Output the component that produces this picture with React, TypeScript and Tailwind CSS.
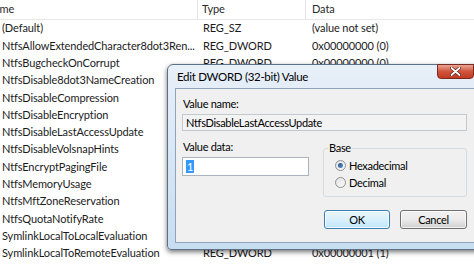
const rows: [string, string, string][] = [
  ['(Default)', 'REG_SZ', '(value not set)'],
  ['NtfsAllowExtendedCharacter8dot3Ren...', 'REG_DWORD', '0x00000000 (0)'],
  ['NtfsBugcheckOnCorrupt', 'REG_DWORD', '0x00000000 (0)'],
  ['NtfsDisable8dot3NameCreation', 'REG_DWORD', '0x00000000 (0)'],
  ['NtfsDisableCompression', 'REG_DWORD', '0x00000000 (0)'],
  ['NtfsDisableEncryption', 'REG_DWORD', '0x00000000 (0)'],
  ['NtfsDisableLastAccessUpdate', 'REG_DWORD', '0x00000001 (1)'],
  ['NtfsDisableVolsnapHints', 'REG_DWORD', '0x00000000 (0)'],
  ['NtfsEncryptPagingFile', 'REG_DWORD', '0x00000000 (0)'],
  ['NtfsMemoryUsage', 'REG_DWORD', '0x00000000 (0)'],
  ['NtfsMftZoneReservation', 'REG_DWORD', '0x00000000 (0)'],
  ['NtfsQuotaNotifyRate', 'REG_DWORD', '0x00000e10 (3600)'],
  ['SymlinkLocalToLocalEvaluation', 'REG_DWORD', '0x00000001 (1)'],
  ['SymlinkLocalToRemoteEvaluation', 'REG_DWORD', '0x00000001 (1)'],
];

function Radio({ checked, label }: { checked?: boolean; label: string }) {
  return (
    <div className="flex h-[17px] items-center">
      <span className="flex h-[11px] w-[11px] items-center justify-center rounded-full border border-[#8f8f8f] bg-gradient-to-br from-[#e2e2e2] to-[#fbfbfb]">
        {checked && <span className="h-[5px] w-[5px] rounded-full bg-gradient-to-br from-[#234f82] to-[#5a96da]" />}
      </span>
      <span className="ml-[3px] leading-[14px]">{label}</span>
    </div>
  );
}

function EditDwordDialog() {
  return (
    <div className="absolute left-[167px] top-[64px] flex h-[186px] w-[316px] flex-col rounded-t-[6px] rounded-b-[4px] border border-[#5d7088] bg-gradient-to-b from-[#e8f0f9] via-[#d8e6f4] to-[#c7ddf0] tracking-[-0.3px] shadow-[0_2px_5px_rgba(0,0,0,0.55)]">
      <div className="relative flex h-[23px] items-center pl-[9px] text-[11.5px] text-black">
        Edit DWORD (32-bit) Value
        <div className="absolute right-[8px] top-[-1px] flex h-[15px] w-[37px] items-center justify-center rounded-b-[4px] border border-[#7a2a22] bg-gradient-to-b from-[#e8a493] via-[#d0533c] to-[#c23b22]">
          <svg width="11" height="9" viewBox="0 0 11 9" aria-hidden="true">
            <path d="M1.5 1 L9.5 8 M9.5 1 L1.5 8" stroke="#5a1d14" strokeWidth="3.2" strokeLinecap="round" />
            <path d="M1.5 1 L9.5 8 M9.5 1 L1.5 8" stroke="#ffffff" strokeWidth="1.8" strokeLinecap="round" />
          </svg>
        </div>
      </div>

      <div className="mx-[7px] mb-[6px] flex flex-1 flex-col border border-[#8fa4ba] bg-[#f0f0f0] pl-[6px] pr-[7px] pt-[7px] leading-[15px] text-black">
        <div className="pl-[1px]">Value name:</div>
        <div className="mt-[3px] flex h-[17px] items-center border border-[#c3c9d0] bg-[#f3f3f3] pl-[3px] leading-[14px]">
          NtfsDisableLastAccessUpdate
        </div>

        <div className="mt-[8px] flex">
          <div className="flex w-[127px] flex-col">
            <div className="pl-[1px]">Value data:</div>
            <div className="mt-[3px] flex h-[19px] items-center border border-[#abb3bc] bg-white pl-[3px]">
              <span className="bg-[#3399ff] px-[1px] leading-[13px] text-white">1</span>
            </div>
          </div>
          <div className="relative ml-[14px] mt-[9px] h-[49px] w-[144px] rounded-[3px] border border-[#d5dadf] pl-[11px] pt-[8px]">
            <span className="absolute left-[4px] top-[-8px] bg-[#f0f0f0] px-[1px] leading-[14px]">Base</span>
            <Radio checked label="Hexadecimal" />
            <Radio label="Decimal" />
          </div>
        </div>

        <div className="mt-[13px] flex justify-end gap-[10px] leading-[14px]">
          <div className="flex h-[19px] w-[66px] items-center justify-center rounded-[3px] border border-[#3c7fb1] bg-gradient-to-b from-[#eaf6fd] via-[#d9f0fc] to-[#bee6fd] shadow-[inset_0_0_0_1px_rgba(255,255,255,0.8)]">
            OK
          </div>
          <div className="flex h-[19px] w-[67px] items-center justify-center rounded-[3px] border border-[#707070] bg-gradient-to-b from-[#f2f2f2] via-[#ebebeb] to-[#cfcfcf] shadow-[inset_0_0_0_1px_rgba(255,255,255,0.7)]">
            Cancel
          </div>
        </div>
      </div>
    </div>
  );
}

export default function App() {
  return (
    <div className="relative h-[266px] w-[474px] overflow-hidden bg-white font-['Lato','Liberation_Sans',sans-serif] text-[11px] tracking-[-0.1px] text-[#1b1b1b]">
      <div className="flex h-[20px] items-stretch border-b border-[#e8e8e8] text-[#2a2a2a]">
        <div className="flex w-[198px] items-center overflow-hidden border-r border-[#e3e3e3]">
          <span className="-ml-[14px] whitespace-nowrap">Name</span>
        </div>
        <div className="flex w-[108px] items-center border-r border-[#e3e3e3] pl-[4px]">Type</div>
        <div className="flex items-center pl-[6px]">Data</div>
      </div>

      {rows.map(([name, type, data]) => (
        <div key={name} className="flex h-[17.3px] items-center whitespace-nowrap">
          <div className="w-[198px] overflow-hidden pl-[2px]">{name}</div>
          <div className="w-[108px] pl-[5px]">{type}</div>
          <div className="pl-[6px]">{data}</div>
        </div>
      ))}

      <EditDwordDialog />
    </div>
  );
}
